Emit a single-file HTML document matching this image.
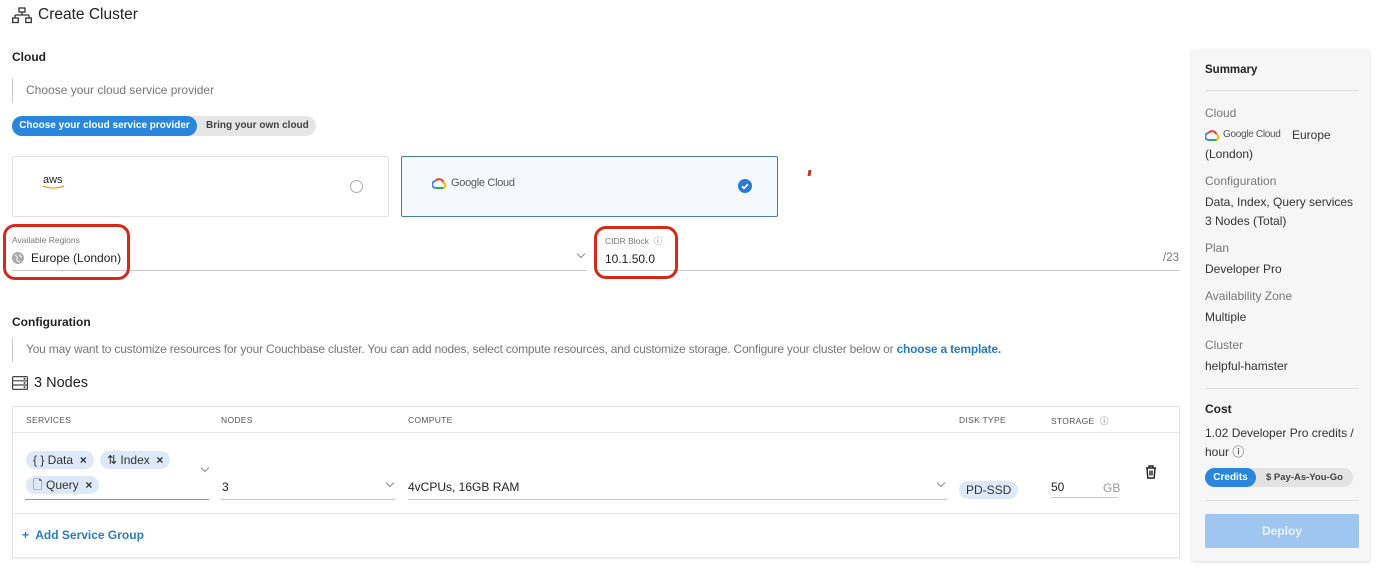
<!DOCTYPE html>
<html><head><meta charset="utf-8"><style>
*{margin:0;padding:0;box-sizing:border-box}
body{width:1381px;height:574px;background:#fff;font-family:"Liberation Sans",sans-serif;color:#222;position:relative;overflow:hidden}
.a{position:absolute;white-space:nowrap}
.b{font-weight:bold}
.g{color:#777}
.line{position:absolute;height:1px;background:#c8c8c8}
.chip{position:absolute;height:18px;border-radius:9px;background:#dde9f6;font-size:12px;line-height:18px;padding:0 7px;color:#333}
.hdr{font-size:8.5px;color:#555;letter-spacing:.3px;top:415px}
.chev{position:absolute;width:6px;height:6px;border-right:1px solid #888;border-bottom:1px solid #888;transform:rotate(45deg)}
.sl{position:absolute;left:1205px;font-size:12px;color:#777}
.sv{position:absolute;left:1205px;font-size:12px;color:#333;line-height:19px}
</style></head><body>

<svg class="a" style="left:12px;top:7px" width="20" height="17" viewBox="0 0 20 17" fill="none" stroke="#333" stroke-width="1.3"><rect x="7" y="1" width="6" height="4"/><path d="M10 5v3M3 8h14M3 8v3M17 8v3"/><rect x="0.7" y="11" width="5.5" height="4.5"/><rect x="13.8" y="11" width="5.5" height="4.5"/></svg>
<div class="a" style="left:38px;top:6px;font-size:15.5px;color:#222">Create Cluster</div>

<div class="a b" style="left:12px;top:50px;font-size:12px">Cloud</div>
<div class="a" style="left:12px;top:78px;width:1px;height:25px;background:#ccc"></div>
<div class="a g" style="left:26px;top:83px;font-size:12px">Choose your cloud service provider</div>

<div class="a" style="left:12px;top:116px;width:304px;height:20px;border-radius:10px;background:#e6e6e6"></div>
<div class="a b" style="left:12px;top:116px;width:185px;height:20px;border-radius:10px;background:#2a86da;color:#fff;font-size:10px;line-height:20px;text-align:center">Choose your cloud service provider</div>
<div class="a b" style="left:206px;top:116px;font-size:10px;line-height:20px;color:#444">Bring your own cloud</div>

<div class="a" style="left:12px;top:156px;width:377px;height:61px;border:1px solid #e2e2e2;border-radius:2px"></div>
<div class="a" style="left:43px;top:174px;font-size:11px;color:#222;line-height:12px">aws</div>
<svg class="a" style="left:42px;top:185px" width="24" height="5"><path d="M1 1Q11 5 22 1" stroke="#f39a1e" stroke-width="1.3" fill="none"/></svg>
<div class="a" style="left:350px;top:180px;width:13px;height:13px;border:1px solid #aaa;border-radius:50%"></div>

<div class="a" style="left:401px;top:156px;width:377px;height:61px;border:1px solid #4d7aa8;border-radius:2px;background:#f5f9fe"></div>
<svg class="a" style="left:432px;top:178px" width="15" height="11" viewBox="0 0 15 11"><path d="M4 10a3.5 3.5 0 0 1-.5-7" stroke="#4285f4" stroke-width="2" fill="none"/><path d="M3.5 3a4.5 4.5 0 0 1 8 1.5" stroke="#ea4335" stroke-width="2" fill="none"/><path d="M11.5 4.5a3 3 0 0 1 0 5.5" stroke="#fbbc05" stroke-width="2" fill="none"/><path d="M4 10h7.5" stroke="#34a853" stroke-width="2"/></svg>
<div class="a" style="left:451px;top:177px;font-size:11px;color:#555;letter-spacing:-.3px">Google Cloud</div>
<svg class="a" style="left:738px;top:179px" width="14" height="14"><circle cx="7" cy="7" r="7" fill="#2a7bd3"/><path d="M4 7.2l2 2 4-4" stroke="#fff" stroke-width="1.8" fill="none"/></svg>

<div class="a" style="left:808px;top:170px;width:3px;height:6px;background:#c9321c;transform:skewX(-10deg)"></div>

<div class="a g" style="left:12px;top:235px;font-size:8.5px">Available Regions</div>
<svg class="a" style="left:12px;top:252px" width="12" height="12"><circle cx="6" cy="6" r="6" fill="#aaa"/><path d="M3 3q3 2 2 4t3 3M8 2q-1 2 2 3" stroke="#eee" stroke-width="1.2" fill="none"/></svg>
<div class="a" style="left:31px;top:251px;font-size:12px">Europe (London)</div>
<div class="line" style="left:12px;top:270px;width:575px"></div>
<div class="chev" style="left:578px;top:251px"></div>
<div class="a" style="left:3px;top:224px;width:127px;height:56px;border:3px solid #d42a1a;border-radius:12px"></div>

<div class="a g" style="left:605px;top:235px;font-size:8.5px">CIDR Block &nbsp;ⓘ</div>
<div class="a" style="left:605px;top:252px;font-size:12px">10.1.50.0</div>
<div class="line" style="left:597px;top:270px;width:583px"></div>
<div class="a g" style="left:1163px;top:252px;font-size:11.5px">/23</div>
<div class="a" style="left:594px;top:226px;width:84px;height:53px;border:3px solid #d42a1a;border-radius:12px"></div>

<div class="a b" style="left:12px;top:315px;font-size:12px">Configuration</div>
<div class="a" style="left:12px;top:338px;width:1px;height:25px;background:#ccc"></div>
<div class="a g" style="left:26px;top:342px;font-size:12px;letter-spacing:-.2px">You may want to customize resources for your Couchbase cluster. You can add nodes, select compute resources, and customize storage. Configure your cluster below or <b style="color:#2a7bbf">choose a template.</b></div>

<svg class="a" style="left:12px;top:376px" width="16" height="14" fill="none" stroke="#444" stroke-width="1.2"><rect x=".6" y=".6" width="14.8" height="12.8" rx="1"/><path d="M1 4.8h14M1 9h14"/><circle cx="12.5" cy="2.7" r=".4" fill="#444"/><circle cx="12.5" cy="6.9" r=".4" fill="#444"/><circle cx="12.5" cy="11.2" r=".4" fill="#444"/></svg>
<div class="a" style="left:34px;top:375px;font-size:14.5px;color:#222">3 Nodes</div>

<div class="a" style="left:12px;top:406px;width:1168px;height:152px;border:1px solid #e3e3e3;box-shadow:0 1px 2px rgba(0,0,0,.08)"></div>
<div class="line" style="left:13px;top:432px;width:1166px;background:#e8e8e8"></div>
<div class="line" style="left:13px;top:513px;width:1166px;background:#e8e8e8"></div>
<div class="a hdr" style="left:26px">SERVICES</div>
<div class="a hdr" style="left:221px">NODES</div>
<div class="a hdr" style="left:408px">COMPUTE</div>
<div class="a hdr" style="left:959px">DISK TYPE</div>
<div class="a hdr" style="left:1051px">STORAGE &nbsp;ⓘ</div>

<div class="chip" style="left:26px;top:451px">{ } Data &nbsp;<b>×</b></div>
<div class="chip" style="left:100px;top:451px">⇅ Index &nbsp;<b>×</b></div>
<div class="chip" style="left:26px;top:476px">🗋 Query &nbsp;<b>×</b></div>
<div class="line" style="left:25px;top:499px;width:184px;background:#7a9cc0"></div>
<div class="chev" style="left:202px;top:465px"></div>

<div class="a" style="left:222px;top:480px;font-size:12px">3</div>
<div class="line" style="left:221px;top:499px;width:174px"></div>
<div class="chev" style="left:387px;top:480px"></div>

<div class="a" style="left:408px;top:480px;font-size:12px">4vCPUs, 16GB RAM</div>
<div class="line" style="left:408px;top:499px;width:539px"></div>
<div class="chev" style="left:938px;top:480px"></div>

<div class="chip" style="left:959px;top:481px;font-size:12px">PD-SSD</div>
<div class="a" style="left:1051px;top:480px;font-size:12px">50</div>
<div class="a g" style="left:1103px;top:481px;font-size:12px;color:#999">GB</div>
<div class="line" style="left:1051px;top:497px;width:67px"></div>
<svg class="a" style="left:1145px;top:465px" width="12" height="14" fill="none" stroke="#222" stroke-width="1.4"><path d="M1 3h10M4 3V1h4v2M2 3l.8 10h6.4L10 3M5 5.5v5M7 5.5v5"/></svg>

<div class="a b" style="left:22px;top:528px;font-size:12px;color:#2a7bbf">+&nbsp; Add Service Group</div>

<div class="a" style="left:1192px;top:50px;width:178px;height:511px;background:#f6f6f6;box-shadow:0 1px 3px rgba(0,0,0,.15)"></div>
<div class="a b" style="left:1205px;top:64px;font-size:11.5px">Summary</div>
<div class="line" style="left:1205px;top:90px;width:154px;background:#e0e0e0"></div>
<div class="sl" style="top:106px">Cloud</div>
<svg class="a" style="left:1205px;top:130px" width="15" height="11" viewBox="0 0 15 11"><path d="M4 10a3.5 3.5 0 0 1-.5-7" stroke="#4285f4" stroke-width="2" fill="none"/><path d="M3.5 3a4.5 4.5 0 0 1 8 1.5" stroke="#ea4335" stroke-width="2" fill="none"/><path d="M11.5 4.5a3 3 0 0 1 0 5.5" stroke="#fbbc05" stroke-width="2" fill="none"/><path d="M4 10h7.5" stroke="#34a853" stroke-width="2"/></svg>
<div class="a" style="left:1223px;top:129px;font-size:10px;color:#555;letter-spacing:-.3px">Google Cloud</div>
<div class="sv" style="top:126px;left:1292px">Europe</div>
<div class="sv" style="top:145px">(London)</div>
<div class="sl" style="top:174px">Configuration</div>
<div class="sv" style="top:193px">Data, Index, Query services<br>3 Nodes (Total)</div>
<div class="sl" style="top:241px">Plan</div>
<div class="sv" style="top:260px">Developer Pro</div>
<div class="sl" style="top:289px">Availability Zone</div>
<div class="sv" style="top:308px">Multiple</div>
<div class="sl" style="top:338px">Cluster</div>
<div class="sv" style="top:357px">helpful-hamster</div>
<div class="line" style="left:1205px;top:388px;width:154px;background:#e0e0e0"></div>
<div class="a b" style="left:1205px;top:402px;font-size:12px">Cost</div>
<div class="sv" style="top:424px">1.02 Developer Pro credits /<br>hour ⓘ</div>
<div class="a" style="left:1205px;top:468px;width:148px;height:19px;border-radius:10px;background:#e3e3e3"></div>
<div class="a b" style="left:1205px;top:468px;width:51px;height:19px;border-radius:10px;background:#2a86da;color:#fff;font-size:10px;line-height:19px;text-align:center">Credits</div>
<div class="a b" style="left:1266px;top:468px;font-size:9.5px;line-height:19px;color:#444">$ Pay-As-You-Go</div>
<div class="line" style="left:1205px;top:500px;width:154px;background:#e0e0e0"></div>
<div class="a b" style="left:1205px;top:514px;width:154px;height:34px;border-radius:2px;background:#9fc6ef;color:#e8f2fc;font-size:12px;line-height:34px;text-align:center">Deploy</div>
</body></html>
